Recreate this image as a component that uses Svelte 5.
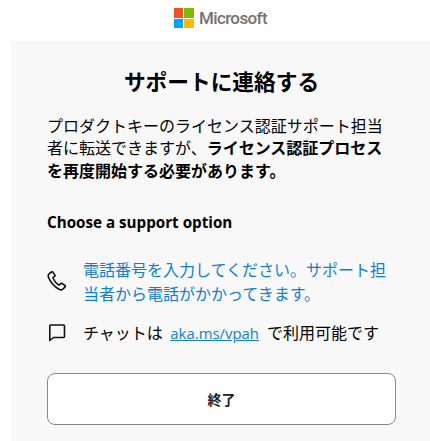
<script lang="ts">
  const tiles = ['#f25022', '#7fba00', '#00a4ef', '#ffb900']
</script>

<div class="page">
  <header class="brand">
    <span class="tiles" aria-hidden="true">
      {#each tiles as color}
        <span style="background: {color}"></span>
      {/each}
    </span>
    <span class="wordmark">Microsoft</span>
  </header>

  <main class="card">
    <h1>サポートに連絡する</h1>
    <p class="intro">
      プロダクトキーのライセンス認証サポート担当者に転送できますが、<b>ライセンス認証プロセスを再度開始する必要があります。</b>
    </p>

    <h2>Choose a support option</h2>

    <div class="option phone">
      <svg viewBox="0 0 20 20" aria-hidden="true">
        <path d="M4.700 1 2.600 2.300C1.300 3.200.9 4.600 1.500 6.200 3 10.600 7.600 16 12 18.300c1.700.8 3.300.6 4.300-.5l1.800-1.900c.4-.5.300-1.100-.2-1.500l-2.900-1.900c-.5-.3-1-.2-1.400.1l-1 1c-.4.400-.9.400-1.400.1-2-1.400-3.900-3.900-5-6.200-.2-.5-.1-1 .3-1.300l1.100-.8c.4-.3.500-.8.300-1.300L6.100 1.400c-.3-.5-.9-.7-1.400-.4Z" />
      </svg>
      <a href="#phone">電話番号を入力してください。サポート担当者から電話がかかってきます。</a>
    </div>

    <div class="option chat">
      <svg viewBox="0 0 20 20" aria-hidden="true">
        <path d="M3.500 3h13c.5 0 1 .5 1 1v10.500c0 .5-.5 1-1 1H6.500L2.800 18.500V4c0-.5.200-1 .7-1Z" />
      </svg>
      <span>チャットは<a href="#chat">aka.ms/vpah</a>で利用可能です</span>
    </div>

    <button type="button">終了</button>
  </main>
</div>

<style>
  :global(body) {
    margin: 0;
    background: #fff;
  }

  .page {
    width: 430px;
    height: 441px;
    overflow: hidden;
    display: flex;
    flex-direction: column;
    font-family: "Noto Sans CJK JP", "Open Sans", sans-serif;
    color: #000;
  }

  .brand {
    height: 41px;
    flex: none;
    display: flex;
    justify-content: center;
    align-items: flex-start;
    gap: 5px;
    padding: 8px 0 0 11px;
    box-sizing: border-box;
  }

  .tiles {
    width: 20px;
    height: 20px;
    display: grid;
    grid-template-columns: 1fr 1fr;
    gap: 1px;
  }

  .wordmark {
    font-family: Roboto, sans-serif;
    font-size: 17px;
    font-weight: 500;
    line-height: 20px;
    color: #737373;
    letter-spacing: -0.6px;
  }

  .card {
    flex: 1;
    margin-left: 11px;
    padding: 24px 34px 0 36px;
    background: #f8f8f8;
    display: flex;
    flex-direction: column;
  }

  h1 {
    margin: 0;
    font-size: 21.700px;
    line-height: 32px;
    font-weight: 700;
    text-align: center;
  }

  .intro {
    margin: 16.500px 0 0;
    font-size: 16px;
    line-height: 22.500px;
  }

  .intro b {
    font-weight: 700;
  }

  h2 {
    margin: 30.500px 0 0;
    font-family: "Open Sans", sans-serif;
    font-size: 15.200px;
    line-height: 20px;
    font-weight: 700;
  }

  .option {
    display: flex;
    align-items: center;
    gap: 16px;
    font-size: 16px;
    line-height: 24px;
  }

  .option svg {
    width: 20px;
    height: 20px;
    flex: none;
    fill: none;
    stroke: #111;
    stroke-width: 1.600;
    stroke-linejoin: round;
  }

  .phone {
    margin-top: 25px;
  }

  .chat {
    margin-top: 15px;
  }

  a {
    color: #0f7fd6;
    text-decoration: none;
  }

  .chat a {
    margin: 0 8px 0 7.500px;
    font-family: "Open Sans", sans-serif;
    font-size: 14.900px;
    text-decoration: underline;
  }

  button {
    margin-top: 28px;
    height: 52px;
    width: 349px;
    background: #fff;
    border: 1px solid #888;
    border-radius: 8px;
    font-family: inherit;
    font-size: 14px;
    font-weight: 700;
    color: #222;
  }
</style>
